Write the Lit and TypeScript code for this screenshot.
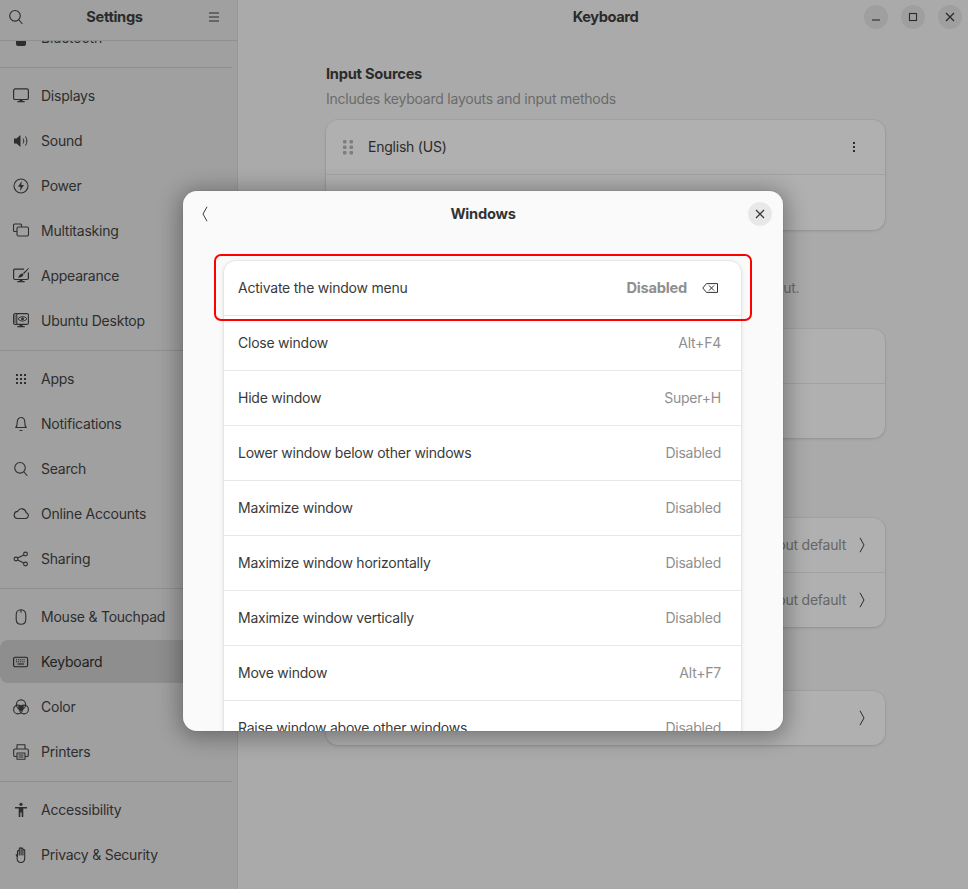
import { LitElement, css, html } from "lit";
import { customElement } from "lit/decorators.js";

const line = (d: string) => html`<svg class="ic" viewBox="0 0 16 16" width="16" height="16"><path d=${d} fill="none" stroke="currentColor" stroke-width="1.1" stroke-linecap="round" stroke-linejoin="round"/></svg>`;

const icons: Record<string, unknown> = {
  bluetooth: html`<svg class="ic" viewBox="0 0 16 16" width="16" height="16"><rect x="3" y="0" width="10" height="16" rx="2" fill="currentColor"/></svg>`,
  displays: html`<svg class="ic" viewBox="0 0 16 16" width="16" height="16"><rect x="0.6" y="0.9" width="14.8" height="10.6" rx="1.6" fill="none" stroke="currentColor" stroke-width="1.2"/><path d="M6.5 11.500h3v1.600h2.200v1.100H4.300v-1.100h2.200z" fill="currentColor"/></svg>`,
  sound: html`<svg class="ic" viewBox="0 0 16 16" width="16" height="16"><path d="M1 5.500h2.500L7.500 2v12L3.500 10.500H1z" fill="currentColor"/><path d="M10 5.500c1 1.500 1 3.500 0 5M12.500 3.500c1.800 2.800 1.800 6.200 0 9" fill="none" stroke="currentColor"/></svg>`,
  power: html`<svg class="ic" viewBox="0 0 16 16" width="16" height="16"><circle cx="8" cy="8" r="7" fill="none" stroke="currentColor" stroke-width="1.100"/><path d="M8.800 3 5 8.800h2.500L7 13l4-6H8.300z" fill="currentColor"/></svg>`,
  multitasking: line("M3 8.500H1.500a1 1 0 0 1-1-1V2a1 1 0 0 1 1-1h6a1 1 0 0 1 1 1v1M5.500 4h8.500a1.500 1.500 0 0 1 1.500 1.500v6a1.500 1.500 0 0 1-1.500 1.500H5.500A1.500 1.500 0 0 1 4 11.500v-6A1.500 1.500 0 0 1 5.500 4z"),
  appearance: html`<svg class="ic" viewBox="0 0 16 16" width="16" height="16"><path d="M11 1.100H2A1.500 1.500 0 0 0 .6 2.600v7.400A1.500 1.500 0 0 0 2 11.500h12a1.500 1.500 0 0 0 1.400-1.500V4.500" fill="none" stroke="currentColor" stroke-width="1.200"/><path d="M6.500 11.500h3v1.600h2.200v1.100H4.300v-1.100h2.200zM15.500 0 10 5l1 1 5-5.500zM9.500 5.500c-2 0-3 1.500-4.500 4 2.500 0 5-.5 5.500-3z" fill="currentColor"/></svg>`,
  ubuntu: html`<svg class="ic" viewBox="0 0 16 16" width="16" height="16"><rect x="0.600" y="0.600" width="14.800" height="10.800" rx="1.500" fill="none" stroke="currentColor" stroke-width="1.100"/><path d="M3.800 1v10" stroke="currentColor" stroke-width="1"/><path d="M1 3h2.500M1 5h2.500M1 7h2.500M1 9h2.500" stroke="currentColor" stroke-width=".8"/><path d="M5 5.800c2.500-3 6.500-3 9 0-2.500 3-6.500 3-9 0z" fill="none" stroke="currentColor"/><circle cx="9.500" cy="5.800" r="1.500" fill="currentColor"/><path d="M6.500 11.500h3v1.600h2.200v1.100H4.300v-1.100h2.200z" fill="currentColor"/></svg>`,
  apps: html`<svg class="ic" viewBox="0 0 16 16" width="16" height="16"><g fill="currentColor"><rect x="3" y="3" width="2" height="2"/><rect x="7" y="3" width="2" height="2"/><rect x="11" y="3" width="2" height="2"/><rect x="3" y="7" width="2" height="2"/><rect x="7" y="7" width="2" height="2"/><rect x="11" y="7" width="2" height="2"/><rect x="3" y="11" width="2" height="2"/><rect x="7" y="11" width="2" height="2"/><rect x="11" y="11" width="2" height="2"/></g></svg>`,
  notifications: line("M2.800 11.500c1-1 1.400-2 1.400-5 0-2.800 1.500-5 3.800-5s3.800 2.200 3.800 5c0 3 .4 4 1.400 5zM7 14.500h2"),
  search: line("M11 11l3 3.500M12.300 6.800a5.300 5.300 0 1 1-10.600 0 5.300 5.300 0 0 1 10.600 0z"),
  cloud: line("M4 12.500h8.500a3 3 0 0 0 .6-5.900A4.500 4.500 0 0 0 4.600 5.400 3.600 3.600 0 0 0 4 12.500z"),
  sharing: html`<svg class="ic" viewBox="0 0 16 16" width="16" height="16"><g fill="none" stroke="currentColor" stroke-width="1.100"><circle cx="3" cy="8" r="1.900"/><circle cx="12.500" cy="3" r="1.900"/><circle cx="12.500" cy="13" r="1.900"/><path d="M4.700 7.100 10.800 3.900M4.700 8.900l6.100 3.200"/></g></svg>`,
  mouse: line("M8 .8c-3 0-4.800 2-4.800 5v4.500c0 3 1.800 5 4.800 5s4.800-2 4.800-5V5.800c0-3-1.800-5-4.800-5zM8 .8v2.500"),
  keyboard: html`<svg class="ic" viewBox="0 0 16 16" width="16" height="16"><rect x="0.600" y="3.300" width="14" height="9.500" rx="1.500" fill="none" stroke="currentColor" stroke-width="1.100"/><path d="M3 5.700h9.500M3 7.700h9.500" stroke="currentColor" stroke-width="1.100" stroke-dasharray="1 .9"/><path d="M4.500 10h6.500" stroke="currentColor" stroke-width="1.100"/></svg>`,
  color: html`<svg class="ic" viewBox="0 0 16 16" width="16" height="16"><g fill="none" stroke="currentColor" stroke-width="1.100"><circle cx="8" cy="5.500" r="4.600"/><circle cx="5" cy="10.500" r="4.400"/><circle cx="11" cy="10.500" r="4.400"/></g><path d="M5.200 7 8 6l2.800 1-.2 3.500L8 12.500 5.400 10.500z" fill="currentColor"/></svg>`,
  printers: line("M4 5V.8h8V5M3.500 12.500H2a1.300 1.300 0 0 1-1.300-1.300V6.300A1.300 1.300 0 0 1 2 5h12a1.300 1.300 0 0 1 1.300 1.300v4.900a1.300 1.300 0 0 1-1.300 1.300h-1.500M4 9h8v6.200H4zM6 11h4M6 13h4"),
  accessibility: html`<svg class="ic" viewBox="0 0 16 16" width="16" height="16"><circle cx="8" cy="2.300" r="1.600" fill="currentColor"/><path d="M2 5h12v1.400H10.300V15H8.700v-4.500H7.300V15H5.700V6.400H2z" fill="currentColor"/></svg>`,
  privacy: line("M4.500 9.500V4.500a.9.900 0 0 1 1.800 0V8M6.300 8V1.800a.9.900 0 0 1 1.800 0V8M8.100 8V2a.9.900 0 0 1 1.800 0V8M9.900 8V3.500a.9.900 0 0 1 1.800 0v7.500c0 2.500-1.500 4.500-3.800 4.500s-3.800-2-3.800-4.500V9.500l-.9-2"),
};

const nav: [string, string][][] = [
  [["bluetooth", "Bluetooth"]],
  [
    ["displays", "Displays"],
    ["sound", "Sound"],
    ["power", "Power"],
    ["multitasking", "Multitasking"],
    ["appearance", "Appearance"],
    ["ubuntu", "Ubuntu Desktop"],
  ],
  [
    ["apps", "Apps"],
    ["notifications", "Notifications"],
    ["search", "Search"],
    ["cloud", "Online Accounts"],
    ["sharing", "Sharing"],
  ],
  [
    ["mouse", "Mouse & Touchpad"],
    ["keyboard", "Keyboard"],
    ["color", "Color"],
    ["printers", "Printers"],
  ],
  [
    ["accessibility", "Accessibility"],
    ["privacy", "Privacy & Security"],
  ],
];

const shortcuts = [
  ["Close window", "Alt+F4"],
  ["Hide window", "Super+H"],
  ["Lower window below other windows", "Disabled"],
  ["Maximize window", "Disabled"],
  ["Maximize window horizontally", "Disabled"],
  ["Maximize window vertically", "Disabled"],
  ["Move window", "Alt+F7"],
  ["Raise window above other windows", "Disabled"],
];

const chevron = html`<svg class="chev" viewBox="0 0 6 16" width="6" height="16"><path d="M1 .8 5 8 1 15.200" fill="none" stroke="currentColor" stroke-width="1"/></svg>`;
const backChevron = html`<svg class="chev" viewBox="0 0 6 16" width="6" height="16"><path d="M5 .8 1 8l4 7.200" fill="none" stroke="currentColor" stroke-width="1"/></svg>`;
const closeX = html`<svg viewBox="0 0 10 10" width="10" height="10"><path d="M1 1l8 8M9 1 1 9" fill="none" stroke="currentColor" stroke-width="1.300"/></svg>`;

@customElement("app-root")
export class AppRoot extends LitElement {
  static styles = css`
    :host {
      display: flex;
      position: relative;
      width: 968px;
      height: 889px;
      overflow: hidden;
      background: #aaaaaa;
      color: #2b2b2b;
      font-family: Inter, "Liberation Sans", sans-serif;
      font-size: 14px;
      letter-spacing: -0.23px;
      line-height: 20px;
    }
    b,
    h2,
    .strong {
      font-size: 14.67px;
      letter-spacing: -0.25px;
    }
    .ic {
      flex: none;
      display: block;
    }
    .chev {
      display: block;
    }

    .sidebar {
      width: 237px;
      flex: none;
      display: flex;
      flex-direction: column;
      background: #a0a0a0;
      border-right: 1px solid #979797;
      overflow: hidden;
    }
    .side-head {
      flex: none;
      display: flex;
      align-items: center;
      justify-content: space-between;
      padding: 0 17px 6px 8px;
      box-sizing: border-box;
      border-bottom: 1px solid #8f8f8f;
      height: 41px;
      position: relative;
      z-index: 1;
      background: #a0a0a0;
    }
    .side-head b {
      font-weight: 700;
      letter-spacing: -0.35px;
      margin-right: 3px;
    }
    .side-head svg {
      display: block;
    }
    .side-list {
      margin-top: -31px;
    }
    .side-group {
      display: flex;
      flex-direction: column;
      gap: 2px;
      padding: 6px 0 8px;
      border-bottom: 1px solid #8f8f8f;
      margin-right: 5px;
    }
    .side-group:last-child {
      border-bottom: none;
    }
    .side-item {
      height: 43px;
      display: flex;
      align-items: center;
      gap: 12px;
      padding-left: 13px;
      border-radius: 8px;
      color: #2e2e2e;
    }
    .side-item.on {
      background: #8e8e8e;
      color: #222;
    }

    .main {
      flex: 1;
      min-width: 0;
      display: flex;
      flex-direction: column;
    }
    .main-head {
      display: grid;
      grid-template-columns: 1fr auto 1fr;
      align-items: center;
      height: 34px;
      padding: 0 6px 0 11px;
    }
    .main-head b {
      font-weight: 700;
      letter-spacing: -0.45px;
    }
    .win {
      display: flex;
      justify-content: flex-end;
      gap: 13px;
    }
    .win span {
      width: 24px;
      height: 24px;
      border-radius: 50%;
      background: #9f9f9f;
      display: flex;
      align-items: center;
      justify-content: center;
    }
    .content {
      padding: 30px 83px 0 88px;
    }
    .section {
      margin-bottom: 24px;
    }
    .section:first-child {
      margin-bottom: 23px;
    }
    .section h2 {
      margin: 0;
      font-weight: 700;
      line-height: 20px;
      padding-bottom: 5px;
    }
    .section p {
      margin: 0;
      color: #6a6a6a;
    }
    .card {
      margin-top: 11px;
      background: #b0b0b0;
      border-radius: 12px;
      box-shadow: 0 0 0 1px rgba(0, 0, 0, 0.03), 0 1px 3px rgba(0, 0, 0, 0.12);
    }
    .section h2 + .card {
      margin-top: 15px;
    }
    .row {
      height: 54px;
      display: flex;
      align-items: center;
      padding: 0 20px 0 14px;
      border-bottom: 1px solid #a2a2a2;
    }
    .row:last-child {
      border-bottom: none;
    }
    .row.tall {
      height: 55px;
    }
    .row .grow {
      flex: 1;
    }
    .row .val {
      color: #666;
      margin-right: 13px;
    }
    .row .add {
      flex: 1;
      text-align: center;
    }
    .grip {
      margin: 0 15px 0 3px;
    }
    .dots {
      margin-right: 3px;
    }

    .modal {
      position: absolute;
      left: 183px;
      top: 191px;
      width: 600px;
      height: 540px;
      background: #fafafa;
      border-radius: 14px;
      overflow: hidden;
      box-shadow: 0 0 0 1px rgba(0, 0, 0, 0.04);
      color: #3a3a3a;
      display: flex;
      flex-direction: column;
    }
    .modal-shadow {
      position: absolute;
      left: 183px;
      top: 191px;
      width: 600px;
      height: 540px;
      border-radius: 14px;
      box-shadow: 0 3px 22px 4px rgba(0, 0, 0, 0.32);
    }
    .modal-head {
      height: 46px;
      flex: none;
      display: grid;
      grid-template-columns: 1fr auto 1fr;
      align-items: center;
      padding: 0 11px;
    }
    .modal-head .chev {
      margin-left: 8px;
    }
    .modal-head b {
      font-weight: 700;
      color: #333;
    }
    .modal-head .close {
      justify-self: end;
      width: 24px;
      height: 24px;
      border-radius: 50%;
      background: #e8e8e8;
      display: flex;
      align-items: center;
      justify-content: center;
    }
    .list {
      margin: 24px 42px 0 41px;
      background: #fff;
      border-radius: 12px 12px 0 0;
      box-shadow: 0 0 0 1px rgba(0, 0, 0, 0.03), 0 1px 4px 1px rgba(0, 0, 0, 0.09);
    }
    .item {
      height: 54px;
      display: flex;
      align-items: center;
      justify-content: space-between;
      padding: 0 20px 0 14px;
      border-bottom: 1px solid #e8e8e8;
    }
    .item .acc {
      color: #8f8f8f;
    }
    .item .acc.strong {
      font-weight: 700;
      margin-left: auto;
    }
    .item .del {
      margin-left: 15px;
      margin-right: 3px;
      display: block;
    }
    .mark {
      position: absolute;
      left: 214px;
      top: 254px;
      width: 538px;
      height: 67px;
      box-sizing: border-box;
      border: 2px solid #f00;
      border-radius: 7px;
    }
  `;

  render() {
    return html`
      <aside class="sidebar">
        <div class="side-head">
          ${icons.search}
          <b>Settings</b>
          <svg viewBox="0 0 12 12" width="12" height="12"><path d="M1 2h10M1 6h10M1 10h10" stroke="currentColor" stroke-width="1"/></svg>
        </div>
        <div class="side-list">
          ${nav.map(
            (group) => html`<div class="side-group">
              ${group.map(
                ([icon, label]) => html`<div class="side-item ${label === "Keyboard" ? "on" : ""}">
                  ${icons[icon]}<span>${label}</span>
                </div>`
              )}
            </div>`
          )}
        </div>
      </aside>
      <main class="main">
        <div class="main-head">
          <span></span>
          <b>Keyboard</b>
          <div class="win">
            <span><svg viewBox="0 0 10 10" width="10" height="10"><path d="M1 8h8" stroke="currentColor" stroke-width="1.100"/></svg></span>
            <span><svg viewBox="0 0 10 10" width="10" height="10"><rect x="1.500" y="1.500" width="7" height="7" fill="none" stroke="currentColor" stroke-width="1.100"/></svg></span>
            <span>${closeX}</span>
          </div>
        </div>
        <div class="content">
          <section class="section">
            <h2>Input Sources</h2>
            <p>Includes keyboard layouts and input methods</p>
            <div class="card">
              <div class="row">
                <svg class="grip" viewBox="0 0 10 16" width="10" height="16"><g fill="#7d7d7d"><rect y="1" width="3.500" height="3.500" rx="1"/><rect x="6.500" y="1" width="3.500" height="3.500" rx="1"/><rect y="6.500" width="3.500" height="3.500" rx="1"/><rect x="6.500" y="6.500" width="3.500" height="3.500" rx="1"/><rect y="12" width="3.500" height="3.500" rx="1"/><rect x="6.500" y="12" width="3.500" height="3.500" rx="1"/></g></svg>
                <span class="grow">English (US)</span>
                <svg class="dots" viewBox="0 0 16 16" width="16" height="16"><g fill="currentColor"><rect x="7" y="3" width="2" height="2"/><rect x="7" y="7" width="2" height="2"/><rect x="7" y="11" width="2" height="2"/></g></svg>
              </div>
              <div class="row tall"><span class="add">+</span></div>
            </div>
          </section>
          <section class="section">
            <h2>Input Source Switching</h2>
            <p>Input sources can be switched using the Super+Space keyboard shortcut.<br />This can be changed in the keyboard settings.</p>
            <div class="card">
              <div class="row"><span class="grow">Use the same source for all windows</span></div>
              <div class="row"><span class="grow">Switch input sources individually for each window</span></div>
            </div>
          </section>
          <section class="section">
            <h2>Special Character Entry</h2>
            <p>Methods for entering symbols and variants</p>
            <div class="card">
              <div class="row"><span class="grow">Alternate Characters Key</span><span class="val">Layout default</span>${chevron}</div>
              <div class="row"><span class="grow">Compose Key</span><span class="val">Layout default</span>${chevron}</div>
            </div>
          </section>
          <section class="section">
            <h2>Keyboard Shortcuts</h2>
            <div class="card">
              <div class="row"><span class="grow">View and Customize Shortcuts</span>${chevron}</div>
            </div>
          </section>
        </div>
      </main>
      <div class="modal-shadow"></div>
      <div class="modal">
        <div class="modal-head">
          ${backChevron}
          <b>Windows</b>
          <span class="close">${closeX}</span>
        </div>
        <div class="list">
          <div class="item">
            <span>Activate the window menu</span>
            <span class="acc strong">Disabled</span>
            <svg class="del" viewBox="0 0 16 10" width="16" height="10"><path d="M.8 5 4.500.6h11v8.800h-11zM7 2.500l5 5M12 2.500l-5 5" fill="none" stroke="#333" stroke-width="1"/></svg>
          </div>
          ${shortcuts.map(
            ([name, keys]) => html`<div class="item"><span>${name}</span><span class="acc">${keys}</span></div>`
          )}
        </div>
      </div>
      <div class="mark"></div>
    `;
  }
}
